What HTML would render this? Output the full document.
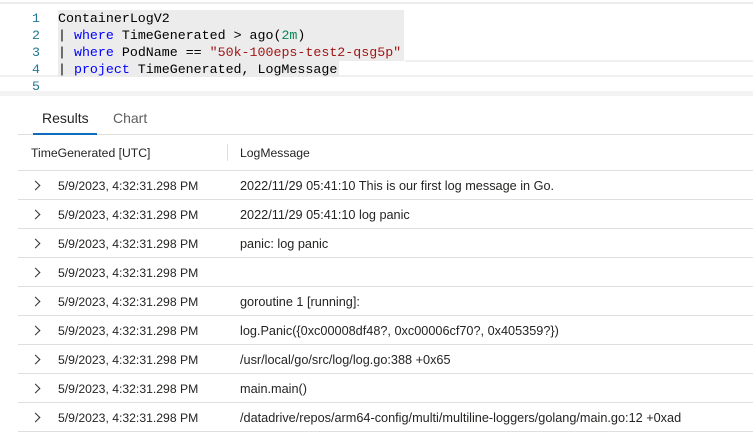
<!DOCTYPE html>
<html><head><meta charset="utf-8"><style>
*{margin:0;padding:0;box-sizing:border-box}
body{width:753px;height:436px;background:#fff;position:relative;overflow:hidden;font-family:"Liberation Sans",sans-serif;color:#252423}
.a{position:absolute}
.code{font-family:"Liberation Mono",monospace;font-size:13.3px;line-height:17px;white-space:pre;color:#000}
.ln{color:#237893;width:12px;text-align:right;left:28px}
.kw{color:#0000ff}.st{color:#a31515}.nu{color:#098658}
.hl{background:#ececec}
.row{position:absolute;left:18px;right:0;height:29px;border-bottom:1px solid #e1dfdd;font-size:12.2px}
.row .c{position:absolute;left:40px;top:8px}
.row .m{position:absolute;left:222px;top:8px;white-space:nowrap;font-size:12.7px}
.row .ch{position:absolute;width:7px;height:7px;border-right:1.3px solid #323130;border-top:1.3px solid #323130;transform:rotate(45deg);top:11px;left:14px}
</style></head><body>
<div class="a" style="left:0;right:0;top:2px;height:2px;background:#ececec"></div>
<div class="a" style="left:405px;right:0;top:60px;height:2px;background:#f0f0f0"></div>
<div class="a" style="left:0;right:0;top:75px;height:2px;background:#f0f0f0"></div>
<div class="a hl" style="left:58px;width:346px;top:10px;height:51px"></div>
<div class="a hl" style="left:58px;width:281px;top:61px;height:16px"></div>
<div class="a code ln" style="top:10px">1
2
3
4
5</div>
<div class="a code" style="left:58px;top:10px">ContainerLogV2
| <span class="kw">where</span> TimeGenerated &gt; ago(<span class="nu">2m</span>)
| <span class="kw">where</span> PodName == <span class="st">"50k-100eps-test2-qsg5p"</span>
| <span class="kw">project</span> TimeGenerated, LogMessage</div>
<div class="a" style="left:0;right:0;top:91px;height:5px;background:#f3f3f3"></div>
<div class="a" style="left:42px;top:110px;font-size:14px;color:#252423">Results</div>
<div class="a" style="left:113px;top:110px;font-size:14px;color:#605e5c">Chart</div>
<div class="a" style="left:18px;right:0;top:134px;height:1px;background:#e1dfdd"></div>
<div class="a" style="left:33px;width:64px;top:133px;height:2px;background:#0f6cbd"></div>
<div class="a" style="left:31px;top:146px;font-size:12.2px">TimeGenerated [UTC]</div>
<div class="a" style="left:227px;top:144px;width:1px;height:17px;background:#e1dfdd"></div>
<div class="a" style="left:240px;top:146px;font-size:12.2px">LogMessage</div>
<div class="a" style="left:18px;right:0;top:170px;height:1px;background:#e1dfdd"></div>
<div class="row" style="top:171px"><i class="ch"></i><span class="c">5/9/2023, 4:32:31.298 PM</span><span class="m">2022/11/29 05:41:10 This is our first log message in Go.</span></div>
<div class="row" style="top:200px"><i class="ch"></i><span class="c">5/9/2023, 4:32:31.298 PM</span><span class="m">2022/11/29 05:41:10 log panic</span></div>
<div class="row" style="top:229px"><i class="ch"></i><span class="c">5/9/2023, 4:32:31.298 PM</span><span class="m">panic: log panic</span></div>
<div class="row" style="top:258px"><i class="ch"></i><span class="c">5/9/2023, 4:32:31.298 PM</span><span class="m"></span></div>
<div class="row" style="top:287px"><i class="ch"></i><span class="c">5/9/2023, 4:32:31.298 PM</span><span class="m">goroutine 1 [running]:</span></div>
<div class="row" style="top:316px"><i class="ch"></i><span class="c">5/9/2023, 4:32:31.298 PM</span><span class="m">log.Panic({0xc00008df48?, 0xc00006cf70?, 0x405359?})</span></div>
<div class="row" style="top:345px"><i class="ch"></i><span class="c">5/9/2023, 4:32:31.298 PM</span><span class="m">/usr/local/go/src/log/log.go:388 +0x65</span></div>
<div class="row" style="top:374px"><i class="ch"></i><span class="c">5/9/2023, 4:32:31.298 PM</span><span class="m">main.main()</span></div>
<div class="row" style="top:403px"><i class="ch"></i><span class="c">5/9/2023, 4:32:31.298 PM</span><span class="m">/datadrive/repos/arm64-config/multi/multiline-loggers/golang/main.go:12 +0xad</span></div>
</body></html>
